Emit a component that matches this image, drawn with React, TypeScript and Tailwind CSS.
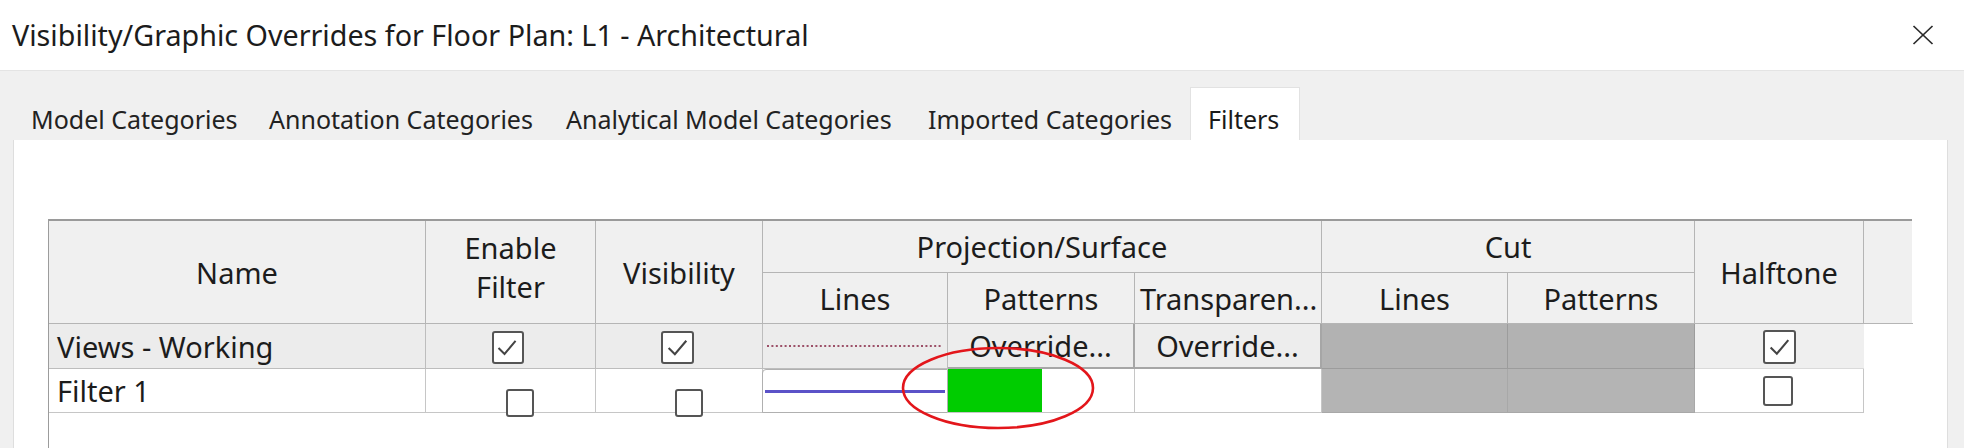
import React from "react";

function CheckBox({ checked, className }: { checked: boolean; className: string }) {
  return (
    <div className={"flex items-center justify-center border-2 border-[#555] rounded-[3px] bg-white " + className}>
      {checked && (
        <svg viewBox="0 0 24 24" className="w-[86%] h-[86%]">
          <polyline points="3.5,12.5 9.5,18.5 20.5,5.5" fill="none" stroke="#444" strokeWidth="2" />
        </svg>
      )}
    </div>
  );
}

const cols = "grid grid-cols-[377px_170px_167px_185px_187px_187px_186px_187px_169px_49px]";

export default function App() {
  const tabs = [
    { label: "Model Categories", w: "w-[240px] pl-[18px]" },
    { label: "Annotation Categories", w: "w-[298px] pl-[16px]" },
    { label: "Analytical Model Categories", w: "w-[361px] pl-[15px]" },
    { label: "Imported Categories", w: "w-[278px] pl-[16px]" },
  ];
  const hc = "flex items-center justify-center border-r border-b border-[#b5b5b5]";
  return (
    <div className="relative w-[1964px] h-[448px] overflow-hidden bg-white font-['Noto_Sans',sans-serif] text-[#1c1c1c]">
      {/* Title bar */}
      <div className="h-[70px] flex items-center justify-between pl-[12px] pr-[30px]">
        <span className="text-[28.7px] leading-none">Visibility/Graphic Overrides for Floor Plan: L1 - Architectural</span>
        <svg width="22" height="20" viewBox="0 0 22 20">
          <line x1="1.5" y1="1" x2="20.5" y2="19" stroke="#2a2a2a" strokeWidth="1.7" />
          <line x1="20.5" y1="1" x2="1.5" y2="19" stroke="#2a2a2a" strokeWidth="1.7" />
        </svg>
      </div>

      {/* Tab band */}
      <div className="h-[378px] bg-[#f0f0f0] border-t border-[#e4e4e4] flex flex-col">
        <div className="h-[69px] pl-[13px] flex items-end">
          {tabs.map((t) => (
            <div key={t.label} className={"h-[53px] pt-[11px] flex items-center text-[25px] leading-none text-[#222] " + t.w}>
              {t.label}
            </div>
          ))}
          <div className="h-[53px] w-[110px] pl-[17px] pt-[11px] flex items-center text-[25px] leading-none bg-white border-x border-t border-[#e2e2e2] text-[#1a1a1a]">
            Filters
          </div>
        </div>

        {/* Panel */}
        <div className="flex-1 ml-[13px] w-[1935px] bg-white border-x border-[#dedede] pt-[79px] pl-[34px] flex flex-col">
          <div className="flex-1 w-[1864px] border-l border-[#9c9c9c] flex flex-col text-[29px] leading-none">
            {/* Header */}
            <div className={cols + " grid-rows-[52px_51px] border-t-2 border-[#9a9a9a] bg-[#f0f0f0]"}>
              <div className={hc + " row-span-2"}>Name</div>
              <div className={hc + " row-span-2 flex-col leading-[39px] pb-[10px]"}>
                <span>Enable</span>
                <span>Filter</span>
              </div>
              <div className={hc + " row-span-2"}>Visibility</div>
              <div className={hc + " col-span-3"}>Projection/Surface</div>
              <div className={hc + " col-span-2"}>Cut</div>
              <div className={hc + " row-span-2"}>Halftone</div>
              <div className="row-span-2 border-b border-[#b5b5b5]"></div>
              <div className={hc}>Lines</div>
              <div className={hc}>Patterns</div>
              <div className={hc + " justify-start pl-[5px]"}>Transparen...</div>
              <div className={hc}>Lines</div>
              <div className={hc}>Patterns</div>
            </div>

            {/* Row 1 */}
            <div className={cols + " h-[45px] bg-[#ececec]"}>
              <div className="flex items-center pl-[8px] border-r border-b border-[#bdbdbd]">Views - Working</div>
              <div className="flex items-center justify-center border-r border-b border-[#bdbdbd]">
                <CheckBox checked className="w-[32px] h-[33px] -translate-x-[3px] translate-y-[1px]" />
              </div>
              <div className="flex items-center justify-center border-r border-b border-[#bdbdbd]">
                <CheckBox checked className="w-[33px] h-[33px] -translate-x-[2px] translate-y-[1px]" />
              </div>
              <div className="flex items-center justify-center border-r border-b border-[#bdbdbd]">
                <svg width="176" height="4" viewBox="0 0 176 4">
                  <line x1="0" y1="2" x2="176" y2="2" stroke="#9c5068" strokeWidth="2.2" strokeDasharray="2 2.4" />
                </svg>
              </div>
              <div className="flex items-center justify-center bg-[#ededed] border-r-2 border-b-2 border-[#a6a6a6]">Override...</div>
              <div className="flex items-center justify-center bg-[#ededed] border-r-2 border-b-2 border-[#a6a6a6]">Override...</div>
              <div className="bg-[#b2b2b2] border-r border-b border-[#9c9c9c]"></div>
              <div className="bg-[#b2b2b2] border-r border-b border-[#9c9c9c]"></div>
              <div className="flex items-center justify-center bg-[#efefef] border-b border-[#dadada]">
                <CheckBox checked className="w-[33px] h-[34px] translate-y-[1px]" />
              </div>
              <div className="bg-white"></div>
            </div>

            {/* Row 2 */}
            <div className={cols + " h-[44px] bg-white"}>
              <div className="flex items-center pl-[8px] border-r border-b border-[#c6c6c6]">Filter 1</div>
              <div className="flex items-center justify-center border-r border-b border-[#c6c6c6]">
                <CheckBox checked={false} className="w-[28px] h-[28px] translate-x-[9px] translate-y-[12px]" />
              </div>
              <div className="flex items-center justify-center border-r border-b border-[#c6c6c6]">
                <CheckBox checked={false} className="w-[28px] h-[28px] translate-x-[10px] translate-y-[12px]" />
              </div>
              <div className="flex items-center pl-[2px] border-t border-l border-r border-b border-[#b0b0b0] rounded-tl-[4px] -ml-px">
                <div className="w-[180px] h-[3px] bg-[#5b52c8]"></div>
              </div>
              <div className="flex border-r border-b border-[#c6c6c6]">
                <div className="w-[94px] h-full bg-[#00cc00]"></div>
              </div>
              <div className="border-r border-b border-[#c6c6c6]"></div>
              <div className="bg-[#b4b4b4] border-r border-b border-[#a8a8a8]"></div>
              <div className="bg-[#b4b4b4] border-r border-b border-[#a8a8a8]"></div>
              <div className="flex items-center justify-center border-r border-b border-[#c6c6c6]">
                <CheckBox checked={false} className="w-[30px] h-[30px] -translate-x-[1px]" />
              </div>
              <div></div>
            </div>
          </div>
        </div>
      </div>

      {/* Red annotation ellipse */}
      <svg className="absolute left-[899px] top-[345px]" width="198" height="86" viewBox="0 0 198 86">
        <ellipse cx="99" cy="43" rx="95" ry="40" fill="none" stroke="#e3161b" strokeWidth="2.6" />
      </svg>
    </div>
  );
}
